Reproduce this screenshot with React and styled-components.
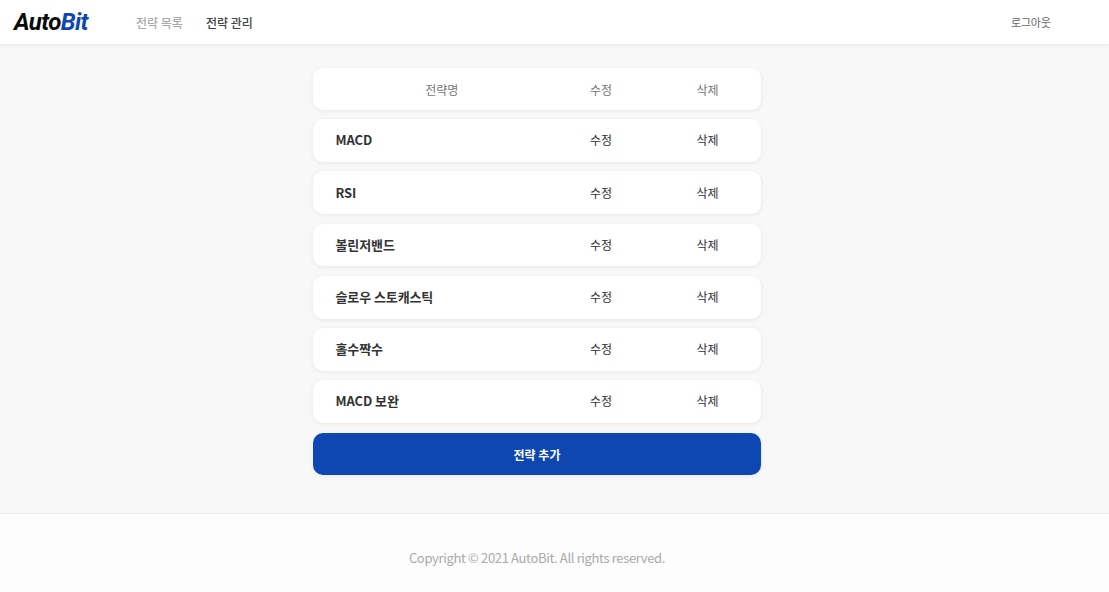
import React from 'react';
import styled, { createGlobalStyle } from 'styled-components';

const Global = createGlobalStyle`
  html, body { margin: 0; padding: 0; background: #f8f8f8; }
  body { font-family: "Noto Sans CJK KR", "Noto Sans", sans-serif; }
  * { box-sizing: border-box; }
`;

const Page = styled.div`
  width: 100%;
  min-height: 592px;
  display: flex;
  flex-direction: column;
`;

const Header = styled.header`
  height: 44px;
  background: #fff;
  box-shadow: 0 1px 4px rgba(0, 0, 0, 0.08);
  display: flex;
  align-items: center;
  padding-left: 14px;
`;

const Logo = styled.div`
  width: 122px;
  font-family: "Roboto", "Liberation Sans", sans-serif;
  font-style: italic;
  font-weight: 700;
  font-size: 24px;
  letter-spacing: -0.65px;
  color: #0a0a0a;
  span { color: #0e47b1; }
`;

const Nav = styled.nav`
  display: flex;
  gap: 23px;
  flex: 1;
`;

const NavItem = styled.a`
  font-size: 12px;
  font-weight: 500;
  color: ${p => (p.$active ? '#444' : '#aaa')};
`;

const Logout = styled.a`
  font-size: 11px;
  letter-spacing: -0.25px;
  color: #666;
  margin-right: 58.5px;
`;

const Main = styled.main`
  flex: 1;
  height: 469px;
  padding: 24px 35px 0 0;
  display: flex;
  flex-direction: column;
  align-items: center;
  gap: 9.4px;
`;

const Row = styled.div`
  width: 448px;
  height: ${p => (p.$head ? '41.8px' : '42.8px')};
  flex: none;
  background: #fff;
  border-radius: 10px;
  box-shadow: 0 1px 4px rgba(0, 0, 0, 0.07);
  display: grid;
  grid-template-columns: 1fr 106px 107px;
  align-items: center;
  padding-left: 22.5px;
  padding-top: ${p => (p.$head ? '1px' : '0')};
  padding-bottom: ${p => (p.$head ? '0' : '1.5px')};
  font-size: 12px;
  color: ${p => (p.$head ? '#777' : '#333')};
`;

const Name = styled.div`
  font-size: 13px;
  font-weight: 700;
  letter-spacing: -0.1px;
  color: #333;
`;

const HeadName = styled.div`
  text-align: center;
`;

const Action = styled.a`
  text-align: center;
  cursor: pointer;
`;

const AddButton = styled.button`
  width: 448px;
  height: 42px;
  flex: none;
  margin-top: 0.6px;
  padding: 1px 0 0;
  border: none;
  border-radius: 10px;
  background: #0e47b1;
  color: #fff;
  font-family: inherit;
  font-size: 12px;
  font-weight: 700;
  box-shadow: 0 1px 4px rgba(0, 0, 0, 0.07);
`;

const Footer = styled.footer`
  height: 79px;
  background: #fdfdfd;
  border-top: 1px solid #ececec;
  display: flex;
  align-items: center;
  justify-content: center;
  padding: 8px 35px 0 0;
  font-size: 13px;
  letter-spacing: -0.35px;
  color: #aaa;
`;

const items = ['MACD', 'RSI', '볼린저밴드', '슬로우 스토캐스틱', '홀수짝수', 'MACD 보완'];

export default function App() {
  return (
    <Page>
      <Global />
      <Header>
        <Logo>Auto<span>Bit</span></Logo>
        <Nav>
          <NavItem>전략 목록</NavItem>
          <NavItem $active>전략 관리</NavItem>
        </Nav>
        <Logout>로그아웃</Logout>
      </Header>
      <Main>
        <Row $head>
          <HeadName>전략명</HeadName>
          <Action>수정</Action>
          <Action>삭제</Action>
        </Row>
        {items.map(name => (
          <Row key={name}>
            <Name>{name}</Name>
            <Action>수정</Action>
            <Action>삭제</Action>
          </Row>
        ))}
        <AddButton>전략 추가</AddButton>
      </Main>
      <Footer>Copyright © 2021 AutoBit. All rights reserved.</Footer>
    </Page>
  );
}
